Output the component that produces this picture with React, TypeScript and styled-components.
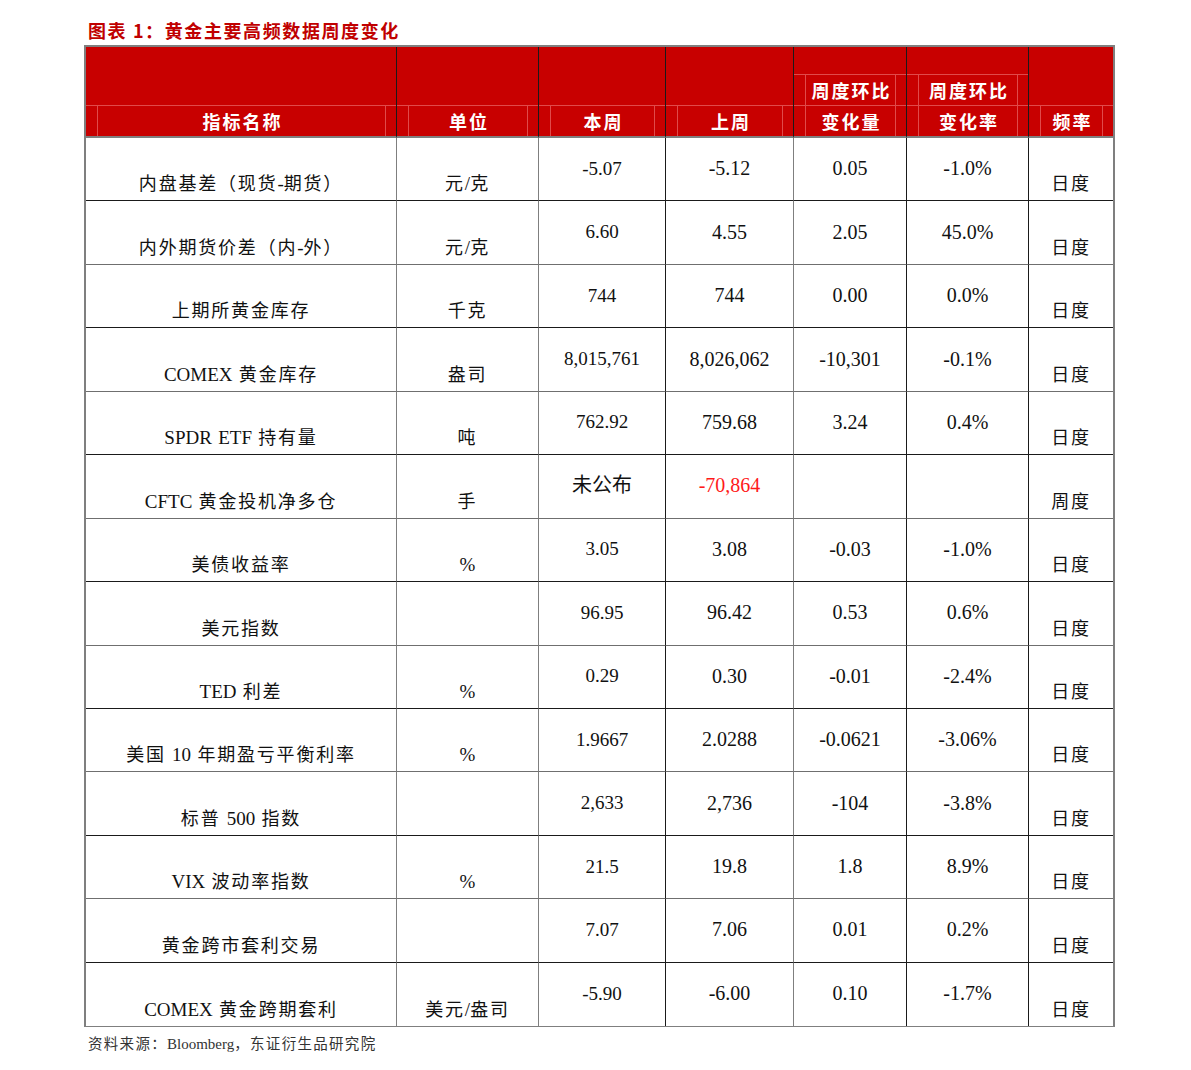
import React from 'react';
import styled, { createGlobalStyle } from 'styled-components';

const GlobalStyle = createGlobalStyle`
    body {
        margin: 0;
        background: #fff;
        font-family: "Liberation Serif", "Noto Sans CJK SC", serif;
    }
`;

interface Row {
    name: string;
    unit: string;
    current: string;
    last: string;
    change: string;
    rate: string;
    freq: string;
    lastRed?: boolean;
}

const rows: Row[] = [
    { name: '内盘基差（现货-期货）', unit: '元/克', current: '-5.07', last: '-5.12', change: '0.05', rate: '-1.0%', freq: '日度' },
    { name: '内外期货价差（内-外）', unit: '元/克', current: '6.60', last: '4.55', change: '2.05', rate: '45.0%', freq: '日度' },
    { name: '上期所黄金库存', unit: '千克', current: '744', last: '744', change: '0.00', rate: '0.0%', freq: '日度' },
    { name: 'COMEX 黄金库存', unit: '盎司', current: '8,015,761', last: '8,026,062', change: '-10,301', rate: '-0.1%', freq: '日度' },
    { name: 'SPDR ETF 持有量', unit: '吨', current: '762.92', last: '759.68', change: '3.24', rate: '0.4%', freq: '日度' },
    { name: 'CFTC 黄金投机净多仓', unit: '手', current: '未公布', last: '-70,864', change: '', rate: '', freq: '周度', lastRed: true },
    { name: '美债收益率', unit: '%', current: '3.05', last: '3.08', change: '-0.03', rate: '-1.0%', freq: '日度' },
    { name: '美元指数', unit: '', current: '96.95', last: '96.42', change: '0.53', rate: '0.6%', freq: '日度' },
    { name: 'TED 利差', unit: '%', current: '0.29', last: '0.30', change: '-0.01', rate: '-2.4%', freq: '日度' },
    { name: '美国 10 年期盈亏平衡利率', unit: '%', current: '1.9667', last: '2.0288', change: '-0.0621', rate: '-3.06%', freq: '日度' },
    { name: '标普 500 指数', unit: '', current: '2,633', last: '2,736', change: '-104', rate: '-3.8%', freq: '日度' },
    { name: 'VIX 波动率指数', unit: '%', current: '21.5', last: '19.8', change: '1.8', rate: '8.9%', freq: '日度' },
    { name: '黄金跨市套利交易', unit: '', current: '7.07', last: '7.06', change: '0.01', rate: '0.2%', freq: '日度' },
    { name: 'COMEX 黄金跨期套利', unit: '美元/盎司', current: '-5.90', last: '-6.00', change: '0.10', rate: '-1.7%', freq: '日度' },
];

// right border colour for each column, as in the source sheet
const columnEdges = ['#7f7f7f', '#7f7f7f', '#1a1a1a', '#7f7f7f', '#1a1a1a', '#1a1a1a', 'transparent'];

const headers: { top?: string; label: string }[] = [
    { label: '指标名称' },
    { label: '单位' },
    { label: '本周' },
    { label: '上周' },
    { top: '周度环比', label: '变化量' },
    { top: '周度环比', label: '变化率' },
    { label: '频率' },
];

const LATIN = /^[A-Za-z0-9%/.,\-]+$/;

// latin runs get no letter spacing, CJK runs are spaced out like the kai face
const MixedText = ({ text }: { text: string }) => {
    const parts = text.split(/([A-Za-z0-9%/.,\-]+)/).filter((p) => p.length > 0);
    return (
        <TextRun>
            {parts.map((p, i) => (LATIN.test(p) ? <Latin key={i}>{p}</Latin> : <span key={i}>{p}</span>))}
        </TextRun>
    );
};

const App = () => {
    return (
        <Page>
            <GlobalStyle />
            <Title>图表 1：黄金主要高频数据周度变化</Title>
            <Table>
                {headers.map((h, i) => (
                    <HeaderCell key={h.label} $last={i === headers.length - 1}>
                        {h.top ? (
                            <>
                                <HeaderSpacer $height={28} />
                                <HeaderBand $topLine>
                                    <HeaderLabel>{h.top}</HeaderLabel>
                                </HeaderBand>
                            </>
                        ) : (
                            <HeaderSpacer $height={59} />
                        )}
                        <HeaderBand>
                            <HeaderLabel>{h.label}</HeaderLabel>
                        </HeaderBand>
                    </HeaderCell>
                ))}
                {rows.map((row, r) => {
                    const last = r === rows.length - 1;
                    const rowEdge = r % 2 === 0 ? '#1a1a1a' : '#6f6f6f';
                    return (
                        <React.Fragment key={row.name}>
                            <LabelCell $edge={columnEdges[0]} $rowEdge={rowEdge} $last={last}><MixedText text={row.name} /></LabelCell>
                            <LabelCell $edge={columnEdges[1]} $rowEdge={rowEdge} $last={last}><MixedText text={row.unit} /></LabelCell>
                            <NumberCell $edge={columnEdges[2]} $rowEdge={rowEdge} $last={last}><MixedText text={row.current} /></NumberCell>
                            <NumberCell $edge={columnEdges[3]} $rowEdge={rowEdge} $last={last} $red={row.lastRed}>{row.last}</NumberCell>
                            <NumberCell $edge={columnEdges[4]} $rowEdge={rowEdge} $last={last}>{row.change}</NumberCell>
                            <NumberCell $edge={columnEdges[5]} $rowEdge={rowEdge} $last={last}>{row.rate}</NumberCell>
                            <LabelCell $edge={columnEdges[6]} $rowEdge={rowEdge} $last={last}>{row.freq}</LabelCell>
                        </React.Fragment>
                    );
                })}
            </Table>
            <Source>
                资料来源：<SourceLatin>Bloomberg</SourceLatin>，东证衍生品研究院
            </Source>
        </Page>
    );
};

const Page = styled.div`
    width: 1191px;
    padding: 18px 0 0 84px;
    box-sizing: border-box;
`;

const Title = styled.div`
    padding-left: 4px;
    height: 27px;
    font-family: "Noto Sans CJK SC", sans-serif;
    font-size: 18px;
    font-weight: 700;
    letter-spacing: 1.6px;
    color: #c00000;
    line-height: 24px;
`;

const Table = styled.div`
    display: grid;
    width: 1031px;
    box-sizing: border-box;
    grid-template-columns: 311px 142px 127px 128px 113px 122px 84px;
    grid-template-rows: 91px repeat(14, 63.45px);
    border: 2px solid #7f7f7f;
    border-bottom-width: 1.5px;
`;

const HeaderCell = styled.div<{ $last: boolean }>`
    display: flex;
    flex-direction: column;
    background-color: #c80000;
    border-right: ${(p) => (p.$last ? 'none' : '1px solid #1a1a1a')};
    border-bottom: 2px solid #7f7f7f;
    box-sizing: border-box;
`;

const HeaderSpacer = styled.div<{ $height: number }>`
    height: ${(p) => p.$height}px;
    flex-shrink: 0;
    border-bottom: 1px solid #e04a4a;
    box-sizing: border-box;
`;

const HeaderBand = styled.div<{ $topLine?: boolean }>`
    flex: 1;
    display: flex;
    padding: 0 10px 0 11px;
    border-bottom: ${(p) => (p.$topLine ? '1px solid #e04a4a' : 'none')};
`;

const HeaderLabel = styled.div`
    flex: 1;
    display: flex;
    align-items: center;
    justify-content: center;
    border-left: 1px solid #e04a4a;
    border-right: 1px solid #e04a4a;
    color: #fff;
    font-family: "Noto Sans CJK SC", sans-serif;
    font-size: 18px;
    font-weight: 700;
    letter-spacing: 2px;
    padding-left: 2px;
`;

const Cell = styled.div<{ $edge: string; $rowEdge: string; $last: boolean; $red?: boolean }>`
    display: flex;
    justify-content: center;
    box-sizing: border-box;
    border-right: ${(p) => (p.$edge === 'transparent' ? 'none' : `1.5px solid ${p.$edge}`)};
    border-bottom: ${(p) => (p.$last ? 'none' : `1.5px solid ${p.$rowEdge}`)};
    color: ${(p) => (p.$red ? '#ff1a1a' : '#111')};
    font-family: "Liberation Serif", "Noto Sans CJK SC", serif;
    line-height: 24px;
    white-space: pre;
`;

const LabelCell = styled(Cell)`
    align-items: flex-end;
    padding-bottom: 4px;
    font-size: 18px;
    letter-spacing: 1.8px;
`;

const NumberCell = styled(Cell)`
    align-items: center;
    padding-bottom: 2px;
    font-size: 20px;
    letter-spacing: 0;
`;

const TextRun = styled.span`
    display: inline-block;
`;

const Latin = styled.span`
    font-size: 19px;
    letter-spacing: 0;
`;

const Source = styled.div`
    padding: 6px 0 0 4px;
    font-family: "Liberation Serif", "Noto Sans CJK SC", serif;
    font-size: 14.5px;
    color: #333;
    letter-spacing: 1.3px;
    line-height: 22px;
`;

const SourceLatin = styled.span`
    font-size: 15px;
    letter-spacing: 0;
`;

export default App;
